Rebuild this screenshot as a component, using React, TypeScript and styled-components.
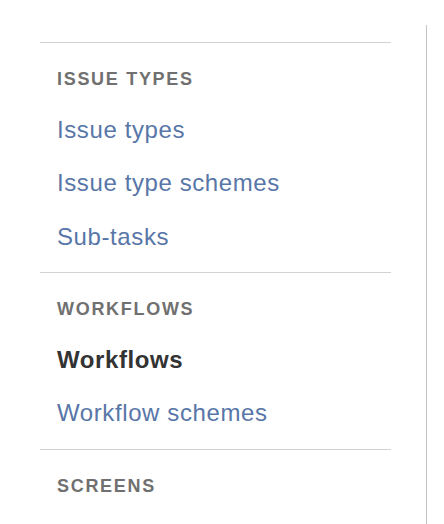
import React from 'react';
import styled, { createGlobalStyle } from 'styled-components';

type NavItem = { label: string; active?: boolean };
type NavSection = { title: string; items: NavItem[] };

const SECTIONS: NavSection[] = [
  {
    title: 'Issue types',
    items: [{ label: 'Issue types' }, { label: 'Issue type schemes' }, { label: 'Sub-tasks' }],
  },
  {
    title: 'Workflows',
    items: [{ label: 'Workflows', active: true }, { label: 'Workflow schemes' }],
  },
  {
    title: 'Screens',
    items: [],
  },
];

const App = () => {
  return (
    <>
      <GlobalStyle />
      <Page>
        <Sidebar>
          {SECTIONS.map((section) => (
            <Section key={section.title}>
              <SectionTitle>{section.title}</SectionTitle>
              <LinkList>
                {section.items.map((item) => (
                  <li key={item.label}>
                    <NavLink href="#" $active={item.active}>
                      {item.label}
                    </NavLink>
                  </li>
                ))}
              </LinkList>
            </Section>
          ))}
        </Sidebar>
        <Content />
      </Page>
    </>
  );
};

export default App;

const GlobalStyle = createGlobalStyle`
  html, body {
    margin: 0;
    padding: 0;
    background: #ffffff;
    overflow: hidden;
  }
  body {
    font-family: "Liberation Sans", Arial, sans-serif;
  }
`;

const Page = styled.div`
  display: flex;
  align-items: flex-start;
  height: 524px;
`;

const Sidebar = styled.nav`
  width: 351px;
  margin: 42px 0 0 40px;
  flex-shrink: 0;
`;

const Section = styled.section`
  border-top: 1px solid #d2d2d2;
  padding: 21px 0 9px 17px;
`;

const SectionTitle = styled.h3`
  margin: 0 0 9px;
  font-size: 18px;
  line-height: 30px;
  font-weight: 700;
  letter-spacing: 1.7px;
  text-transform: uppercase;
  color: #707070;
`;

const LinkList = styled.ul`
  list-style: none;
  margin: 0;
  padding: 0;
`;

const NavLink = styled.a<{ $active?: boolean }>`
  display: block;
  font-size: 24px;
  line-height: 53.33px;
  letter-spacing: 0.6px;
  text-decoration: none;
  font-weight: ${({ $active }) => ($active ? 700 : 400)};
  color: ${({ $active }) => ($active ? '#333333' : '#5876a8')};
`;

const Content = styled.main`
  flex: 1;
  align-self: stretch;
  margin: 25px 0 0 35px;
  border-left: 1px solid #c4c4c4;
`;
